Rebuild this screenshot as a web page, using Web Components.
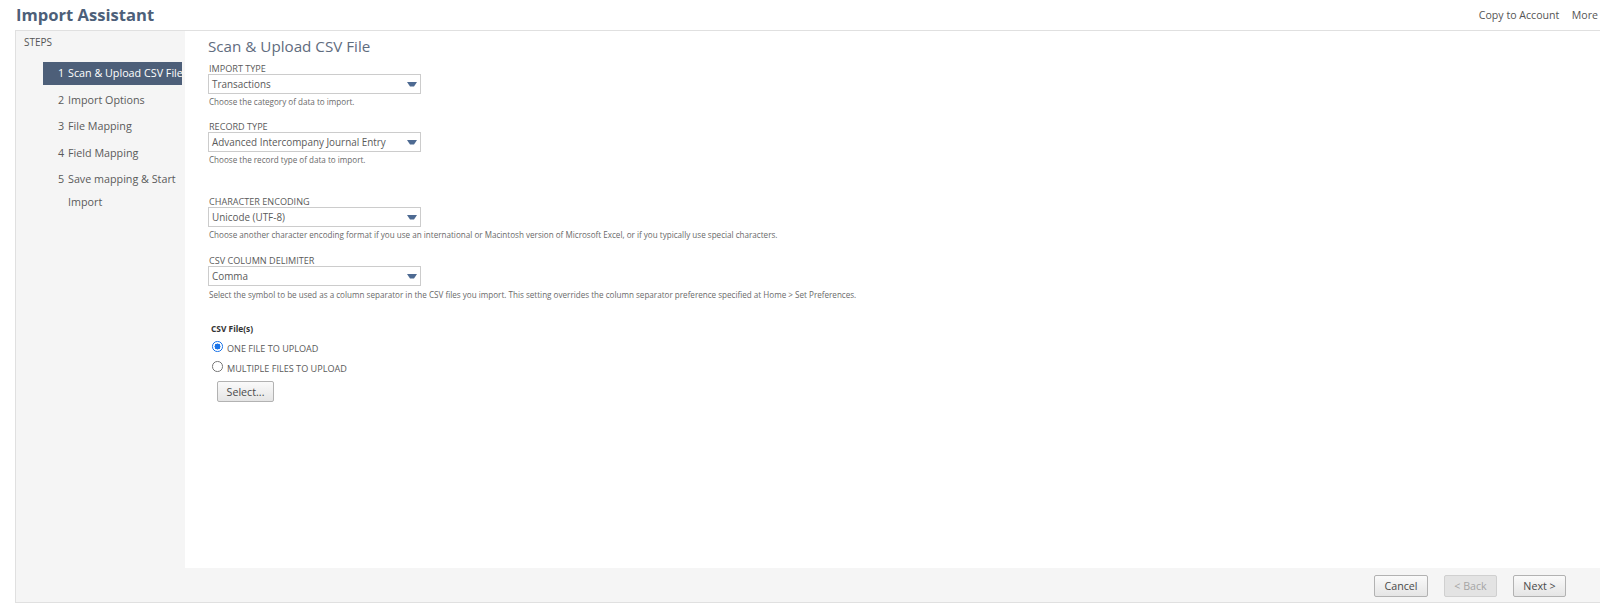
<!DOCTYPE html>
<html lang="en"><head><meta charset="utf-8"><title>Import Assistant</title>
<style>
html,body{margin:0;padding:0;background:#fff;height:100%;overflow:hidden}
body{font-family:"Open Sans","Noto Sans",sans-serif;color:#4d5f79}
</style></head><body>
<import-app></import-app>
<script>
function el(name,css,html){customElements.define(name,class extends HTMLElement{constructor(){super();this.attachShadow({mode:'open'}).innerHTML='<style>'+css+'</style>'+(typeof html==='function'?html(this):html)}})}
el('page-header',`:host{display:flex;align-items:center;height:30px;padding:0 2px 0 16px;box-sizing:border-box}
h1{margin:0;font-size:16.6px;font-weight:700;color:#4d5f79;flex:1;line-height:30px}
a{font-size:10.6px;color:#555;margin-left:12.5px;line-height:30px}`,
`<h1>Import Assistant</h1><a>Copy to Account</a><a>More</a>`);
el('step-item',`:host{display:flex;box-sizing:border-box;margin-left:27px;width:139px;font-size:10.75px;color:#5a5a5a;line-height:22.5px;padding:0 0 0 15px;margin-bottom:4px;overflow:hidden}
:host([active]){background:#4d5f79;color:#fff;white-space:nowrap}
b{font-weight:400;width:10px;flex:none}`,
`<b><slot name="n"></slot></b><div><slot></slot></div>`);
el('step-list',`:host{display:block;width:169px;background:#f5f5f5;flex:none;box-sizing:border-box;padding-top:3px}
h2{margin:0 0 12px 8px;font-size:10px;font-weight:400;color:#555;line-height:16px}`,
`<h2>STEPS</h2><slot></slot>`);
el('nice-select',`:host{display:block}
label{display:block;font-size:9.1px;line-height:14px;color:#5a5a5a;padding-left:1px;height:12px}
.box{width:213px;height:20px;box-sizing:border-box;border:1px solid #ccc;display:flex;align-items:center;justify-content:space-between;padding:0 3px 0 3px;font-size:9.9px;color:#5a5a5a;background:#fff}
svg{display:block}
p{margin:0;font-size:8.1px;line-height:11px;color:#6a6a6a;padding:var(--help-gap,2px) 0 0 1px;white-space:nowrap}`,
h=>`<label>${h.getAttribute('label')}</label><div class="box"><span>${h.getAttribute('value')}</span><svg width="10" height="5" viewBox="0 0 10 5"><path d="M0 0h10L7 4.5H3z" fill="#4d6a92"/></svg></div><p><slot></slot></p>`);
el('radio-row',`:host{display:flex;align-items:center;height:20px;font-size:9.1px;color:#5a5a5a;padding-left:4px}
i{width:10.5px;height:10.5px;border-radius:50%;border:1px solid #777;box-sizing:border-box;margin:-4px 4.5px 0 0;background:#fff;display:block;flex:none}
:host([checked]) i{border:1px solid #1a73e8;background:radial-gradient(circle,#1a73e8 0 2.8px,#fff 3.2px)}`,
`<i></i><slot></slot>`);
el('ui-button',`:host{display:inline-flex;align-items:center;justify-content:center;box-sizing:border-box;height:var(--h,22px);border:1px solid #b2b2b2;border-radius:2px;background:linear-gradient(#fafafa,#e5e5e5);font-size:10.7px;font-weight:400;color:#4a4a4a;width:var(--w,53px)}
:host([disabled]){background:#e3e3e3;border-color:#d0d0d0;color:#a5a5a5}`,`<slot></slot>`);
el('footer-bar',`:host{display:flex;justify-content:flex-end;gap:16px;align-items:flex-start;height:34px;background:#f5f5f5;padding:7px 34px 0 0;box-sizing:border-box}`,`<slot></slot>`);
el('import-form',`:host{display:block;flex:1;box-sizing:border-box;padding:5px 0 0 23px;min-width:0}
h2{margin:0 0 6px;font-size:15.2px;font-weight:400;color:#5f6c7e;line-height:20px}
.g{margin-bottom:13px}.g2{margin-bottom:30px}.g3{margin-bottom:14px}
.csv{margin:0;padding:0 0 0 3px;font-size:8.4px;font-weight:700;color:#333;line-height:12px;margin-top:23.5px;margin-bottom:3.5px}
.b{margin:1.5px 0 0 9px}`,
`<h2>Scan &amp; Upload CSV File</h2>
<nice-select class="g" label="IMPORT TYPE" value="Transactions">Choose the category of data to import.</nice-select>
<nice-select class="g2" label="RECORD TYPE" value="Advanced Intercompany Journal Entry">Choose the record type of data to import.</nice-select>
<nice-select class="g3" label="CHARACTER ENCODING" value="Unicode (UTF-8)">Choose another character encoding format if you use an international or Macintosh version of Microsoft Excel, or if you typically use special characters.</nice-select>
<nice-select style="--help-gap:2.5px" label="CSV COLUMN DELIMITER" value="Comma">Select the symbol to be used as a column separator in the CSV files you import. This setting overrides the column separator preference specified at Home &gt; Set Preferences.</nice-select>
<div class="csv">CSV File(s)</div>
<radio-row checked>ONE FILE TO UPLOAD</radio-row>
<radio-row>MULTIPLE FILES TO UPLOAD</radio-row>
<ui-button class="b" style="--w:57px;--h:21px">Select...</ui-button>`);
el('import-app',`:host{display:block;height:606px}
.panel{margin-left:15px;height:573px;border:solid #e0e0e0;border-width:1px 0 1px 1px;display:flex;flex-direction:column;box-sizing:border-box}
.main{display:flex;flex:1;min-height:0}`,
`<page-header></page-header><div class="panel"><div class="main"><step-list>
<step-item active><span slot="n">1</span>Scan &amp; Upload CSV File</step-item>
<step-item><span slot="n">2</span>Import Options</step-item>
<step-item><span slot="n">3</span>File Mapping</step-item>
<step-item><span slot="n">4</span>Field Mapping</step-item>
<step-item><span slot="n">5</span>Save mapping &amp; Start Import</step-item>
</step-list><import-form></import-form></div>
<footer-bar><ui-button style="--w:54px">Cancel</ui-button><ui-button disabled>&lt; Back</ui-button><ui-button>Next &gt;</ui-button></footer-bar></div>`);
</script>
</body></html>
